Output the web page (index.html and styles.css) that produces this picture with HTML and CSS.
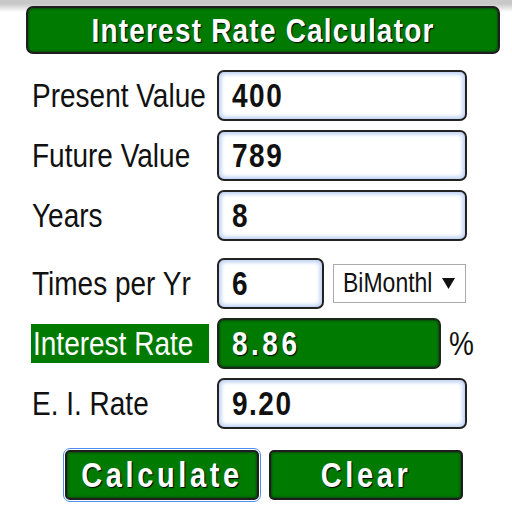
FILE: index.html
```html
<!DOCTYPE html>
<html lang="en">
<head>
<meta charset="utf-8">
<title>Interest Rate Calculator</title>
<link rel="stylesheet" href="styles.css">
</head>
<body>
<div class="app">
  <div class="header"><span class="t">Interest Rate Calculator</span></div>
  <div class="form">
    <div class="row">
      <div class="label"><span class="t">Present Value</span></div>
      <div class="field"><span class="t">400</span></div>
    </div>
    <div class="row">
      <div class="label"><span class="t">Future Value</span></div>
      <div class="field"><span class="t">789</span></div>
    </div>
    <div class="row">
      <div class="label"><span class="t">Years</span></div>
      <div class="field"><span class="t">8</span></div>
    </div>
    <div class="row row-times">
      <div class="label"><span class="t">Times per Yr</span></div>
      <div class="field field-short"><span class="t">6</span></div>
      <div class="select"><span class="t">BiMonthl</span><svg class="arrow" width="13" height="13" viewBox="0 0 13 13"><path d="M0 1 H13 L6.5 12 Z" fill="#111"/></svg></div>
    </div>
    <div class="row">
      <div class="label label-green"><span class="t">Interest Rate</span></div>
      <div class="field field-green"><span class="t">8.86</span></div>
      <div class="pct"><span class="t">%</span></div>
    </div>
    <div class="row">
      <div class="label"><span class="t">E. I. Rate</span></div>
      <div class="field"><span class="t">9.20</span></div>
    </div>
    <div class="buttons">
      <button class="btn btn-focus"><span class="t">Calculate</span></button>
      <button class="btn"><span class="t">Clear</span></button>
    </div>
  </div>
</div>
</body>
</html>
```

FILE: styles.css
```css
html, body {
  margin: 0;
  padding: 0;
}
body {
  width: 512px;
  height: 512px;
  overflow: hidden;
  font-family: "Liberation Sans", Arial, sans-serif;
  color: #111;
  background: #fff linear-gradient(#c8c8c8 0, #c8c8c8 4px, #ffffff 12px) no-repeat;
  background-size: 100% 12px;
}
.t {
  display: inline-block;
  transform: scaleY(1.2);
}
.app {
  padding-top: 6px;
}
.header {
  margin-left: 26px;
  width: 474px;
  height: 48px;
  box-sizing: border-box;
  border: 2px solid #1e1e1e;
  border-radius: 7px;
  background: #007a00;
  box-shadow: inset 0 0 2px 1px #0a4a10;
  color: #fff;
  font-size: 28px;
  font-weight: bold;
  letter-spacing: 1.2px;
  text-shadow: 1px 1px 1px #000;
  display: flex;
  align-items: center;
  justify-content: center;
  padding-top: 1px;
}
.form {
  margin-left: 31px;
  padding-top: 16px;
  display: flex;
  flex-direction: column;
  gap: 9px;
}
.row {
  display: flex;
  align-items: center;
  height: 51px;
}
.row-times {
  margin-top: 8px;
}
.label {
  width: 178px;
  margin-right: 8px;
  font-size: 28px;
  padding-left: 1px;
  box-sizing: border-box;
}
.label-green {
  background: #007a00;
  color: #fff;
  height: 39px;
  display: flex;
  align-items: center;
  padding-left: 2px;
}
.field {
  width: 250px;
  height: 51px;
  box-sizing: border-box;
  border: 2px solid #222;
  border-radius: 7px;
  background: #fff;
  box-shadow: inset 0 0 4px 2px #b4caf2;
  padding-left: 13px;
  font-size: 28px;
  font-weight: bold;
  letter-spacing: 1.5px;
  display: flex;
  align-items: center;
}
.field-short {
  width: 107px;
}
.field-green {
  width: 224px;
  background: #007a00;
  box-shadow: inset 0 0 2px 1px #0a4a10;
  border-color: #1a2a1a;
  color: #fff;
  letter-spacing: 3.5px;
  text-shadow: 1px 1px 1px #000;
}
.select {
  margin-left: 9px;
  width: 133px;
  height: 39px;
  box-sizing: border-box;
  border: 1px solid #aaa;
  background: #fff;
  padding-left: 9px;
  padding-right: 10px;
  font-size: 23px;
  display: flex;
  align-items: center;
  justify-content: space-between;
}
.arrow {
  display: block;
}
.pct {
  margin-left: 8px;
  font-size: 28px;
}
.buttons {
  display: flex;
  gap: 10px;
  margin-left: 34px;
  margin-top: 12px;
}
.btn {
  width: 194px;
  height: 50px;
  box-sizing: border-box;
  border: 2px solid #1e1e1e;
  border-radius: 5px;
  background: #007a00;
  box-shadow: inset 0 0 2px 1px #0a4a10;
  color: #fff;
  font-family: "Liberation Sans", Arial, sans-serif;
  font-size: 29px;
  font-weight: bold;
  letter-spacing: 3.6px;
  text-shadow: 1px 1px 1px #000;
  padding: 0;
  display: flex;
  align-items: center;
  justify-content: center;
}
.btn-focus {
  outline: 1px solid #4d8ff0;
  outline-offset: 1px;
}
```
